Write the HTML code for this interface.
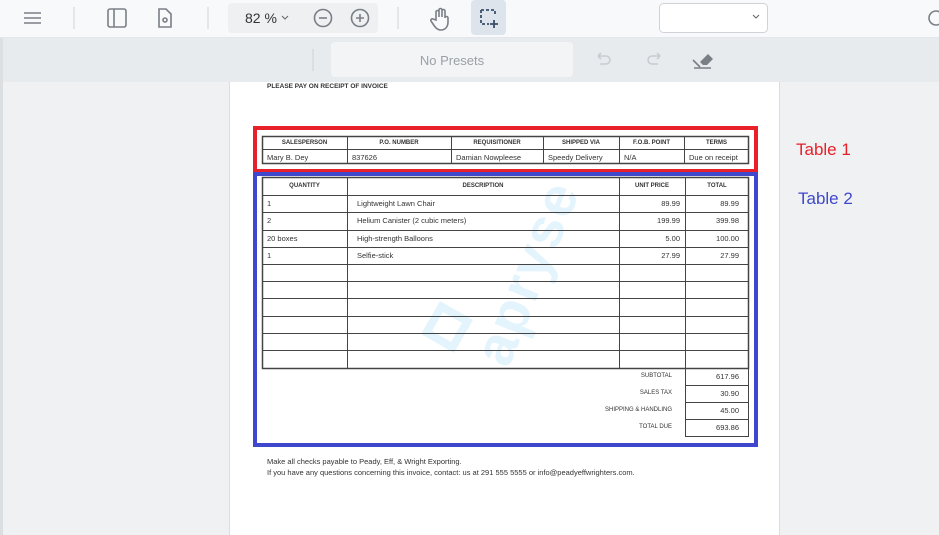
<!DOCTYPE html>
<html><head><style>
*{margin:0;padding:0;box-sizing:border-box}
body{width:939px;height:535px;overflow:hidden;background:#f0f1f3;font-family:"Liberation Sans",sans-serif;position:relative}
.a{position:absolute}
.t{font-size:7.5px;color:#333;white-space:nowrap}
.h{font-size:6px;font-weight:bold;color:#333;text-align:center}
.r{text-align:right}
</style></head><body>
<div class="a" style="left:0;top:0;width:939px;height:38px;background:#f8f9fa;border-bottom:1px solid #e3e6ea"></div>
<div class="a" style="left:0;top:38px;width:939px;height:44px;background:#e8ebee"></div>
<div class="a" style="left:0;top:38px;width:3px;height:497px;background:#dcdfe2"></div>
<svg class="a" style="left:0;top:0" width="939" height="82">
<g stroke="#7a7f86" stroke-width="1.6" fill="none">
<path d="M24 13h17M24 18h17M24 23h17"/>
<rect x="108" y="9" width="18" height="18" rx="2"/><path d="M114 9v18"/>
<path d="M159 9h7l5 5v13h-12z"/><circle cx="165" cy="20" r="2"/>
<path d="M436 20v-8a1.5 1.5 0 013 0v5v-7a1.5 1.5 0 013 0v7v-6a1.5 1.5 0 013 0v7a1.5 1.5 0 013 0v4c0 5-3 8-7 8s-6-3-8-6l-2-3a1.5 1.5 0 012-2z"/>
<circle cx="936" cy="18" r="7"/>
</g>
<path d="M74 7v22M208 7v22M398 7v22M313 49v22" stroke="#d0d3d7" stroke-width="1"/>
<rect x="228" y="3" width="150" height="30" rx="4" fill="#eef0f2"/>
<text x="245" y="23" font-size="14" fill="#333" font-family="Liberation Sans">82 %</text>
<path d="M282 16l3 3 3-3" stroke="#666" fill="none"/>
<g stroke="#7a7f86" stroke-width="1.6" fill="none">
<circle cx="323" cy="18" r="8.5"/><path d="M319 18h8"/>
<circle cx="360" cy="18" r="8.5"/><path d="M356 18h8M360 14v8"/>
</g>
<rect x="471" y="0" width="35" height="35" rx="4" fill="#dde4ec"/>
<path d="M481 10h14v6M481 10v14h8" stroke="#3a4f6a" stroke-width="1.8" fill="none" stroke-dasharray="3 2"/>
<path d="M494 20v8M490 24h8" stroke="#3a4f6a" stroke-width="1.8"/>
<rect x="659.5" y="3.5" width="108" height="29" rx="4" fill="#fff" stroke="#cfd3d8"/>
<path d="M753 15l3 3 3-3" stroke="#666" fill="none"/>
<rect x="331" y="42" width="242" height="35" rx="4" fill="#f3f4f6"/>
<text x="452" y="65" font-size="13" fill="#9aa0a6" text-anchor="middle" font-family="Liberation Sans">No Presets</text>
<path d="M598 56h8a4 4 0 010 8h-6M598 56l3-3M598 56l3 3" stroke="#c8ccd0" stroke-width="1.6" fill="none"/>
<path d="M660 56h-8a4 4 0 000 8h6M660 56l-3-3M660 56l-3 3" stroke="#c8ccd0" stroke-width="1.6" fill="none"/>
<path d="M700 62l8-8 5 5-6 6h-4z" fill="#7a7f86"/><path d="M693 60l7 7M694 68h17" stroke="#7a7f86" stroke-width="1.6" fill="none"/>
</svg>
<div class="a" style="left:229px;top:82px;width:551px;height:453px;background:#fff;border-left:1px solid #ddd;border-right:1px solid #ddd"></div>
<div class="a t" style="left:267px;top:83px;font-size:6.5px;font-weight:bold">PLEASE PAY ON RECEIPT OF INVOICE</div>
<div class="a" style="left:430px;top:240px;transform:rotate(-68deg);font-size:56px;color:#e3f4fc;font-weight:bold;letter-spacing:2px">apryse</div>
<svg class="a" style="left:420px;top:300px" width="60" height="60"><rect x="12" y="12" width="30" height="30" transform="rotate(30 27 27)" fill="none" stroke="#e3f4fc" stroke-width="8"/></svg>
<div class="a" style="left:253px;top:126px;width:505px;height:47px;border:4px solid #e8202a"></div>
<svg class="a" style="left:0;top:0" width="939" height="535">
<g stroke="#444" stroke-width="1" fill="none">
<rect x="262.5" y="136.5" width="486" height="27" stroke-width="1.5"/>
<path d="M262 149.5h487M347.5 136v28M451.5 136v28M543.5 136v28M619.5 136v28M684.5 136v28"/>
<rect x="262.5" y="177.5" width="486" height="191" stroke-width="1.5"/>
<path d="M262 195.5h487M262 212.5h487M262 230.5h487M262 247.5h487M262 264.5h487M262 281.5h487M262 298.5h487M262 316.5h487M262 333.5h487M262 350.5h487M347.5 177v191M619.5 177v191M685.5 177v260"/>
<path d="M685 385.5h64M685 402.5h64M685 419.5h64M685 436.5h64M748.5 368v69"/>
</g>
</svg>
<div class="a h" style="left:262px;top:140px;width:85px">SALESPERSON</div>
<div class="a h" style="left:347px;top:140px;width:104px">P.O. NUMBER</div>
<div class="a h" style="left:451px;top:140px;width:92px">REQUISITIONER</div>
<div class="a h" style="left:543px;top:140px;width:76px">SHIPPED VIA</div>
<div class="a h" style="left:619px;top:140px;width:65px">F.O.B. POINT</div>
<div class="a h" style="left:684px;top:140px;width:65px">TERMS</div>
<div class="a t" style="left:267px;top:153px">Mary B. Dey</div>
<div class="a t" style="left:352px;top:153px">837626</div>
<div class="a t" style="left:456px;top:153px">Damian Nowpleese</div>
<div class="a t" style="left:548px;top:153px">Speedy Delivery</div>
<div class="a t" style="left:624px;top:153px">N/A</div>
<div class="a t" style="left:689px;top:153px">Due on receipt</div>
<div class="a" style="left:253px;top:172px;width:505px;height:275px;border:4px solid #3f48cc"></div>
<div class="a h" style="left:262px;top:183px;width:85px">QUANTITY</div>
<div class="a h" style="left:347px;top:183px;width:272px">DESCRIPTION</div>
<div class="a h" style="left:619px;top:183px;width:66px">UNIT PRICE</div>
<div class="a h" style="left:685px;top:183px;width:64px">TOTAL</div>
<div class="a t" style="left:267px;top:199px">1</div><div class="a t" style="left:357px;top:199px">Lightweight Lawn Chair</div><div class="a t r" style="left:619px;top:199px;width:61px">89.99</div><div class="a t r" style="left:685px;top:199px;width:54px">89.99</div>
<div class="a t" style="left:267px;top:216px">2</div><div class="a t" style="left:357px;top:216px">Helium Canister (2 cubic meters)</div><div class="a t r" style="left:619px;top:216px;width:61px">199.99</div><div class="a t r" style="left:685px;top:216px;width:54px">399.98</div>
<div class="a t" style="left:267px;top:234px">20 boxes</div><div class="a t" style="left:357px;top:234px">High-strength Balloons</div><div class="a t r" style="left:619px;top:234px;width:61px">5.00</div><div class="a t r" style="left:685px;top:234px;width:54px">100.00</div>
<div class="a t" style="left:267px;top:251px">1</div><div class="a t" style="left:357px;top:251px">Selfie-stick</div><div class="a t r" style="left:619px;top:251px;width:61px">27.99</div><div class="a t r" style="left:685px;top:251px;width:54px">27.99</div>
<div class="a t r" style="left:560px;top:373px;width:112px;font-size:6px">SUBTOTAL</div><div class="a t r" style="left:685px;top:372px;width:54px">617.96</div>
<div class="a t r" style="left:560px;top:390px;width:112px;font-size:6px">SALES TAX</div><div class="a t r" style="left:685px;top:389px;width:54px">30.90</div>
<div class="a t r" style="left:560px;top:407px;width:112px;font-size:6px">SHIPPING &amp; HANDLING</div><div class="a t r" style="left:685px;top:406px;width:54px">45.00</div>
<div class="a t r" style="left:560px;top:424px;width:112px;font-size:6px">TOTAL DUE</div><div class="a t r" style="left:685px;top:423px;width:54px">693.86</div>
<div class="a t" style="left:267px;top:457px">Make all checks payable to Peady, Eff, &amp; Wright Exporting.</div>
<div class="a t" style="left:267px;top:468px">If you have any questions concerning this invoice, contact: us at 291 555 5555 or info@peadyeffwrighters.com.</div>
<div class="a" style="left:796px;top:140px;font-size:17px;color:#e8202a">Table 1</div>
<div class="a" style="left:798px;top:189px;font-size:17px;color:#3f48cc">Table 2</div>
</body></html>
